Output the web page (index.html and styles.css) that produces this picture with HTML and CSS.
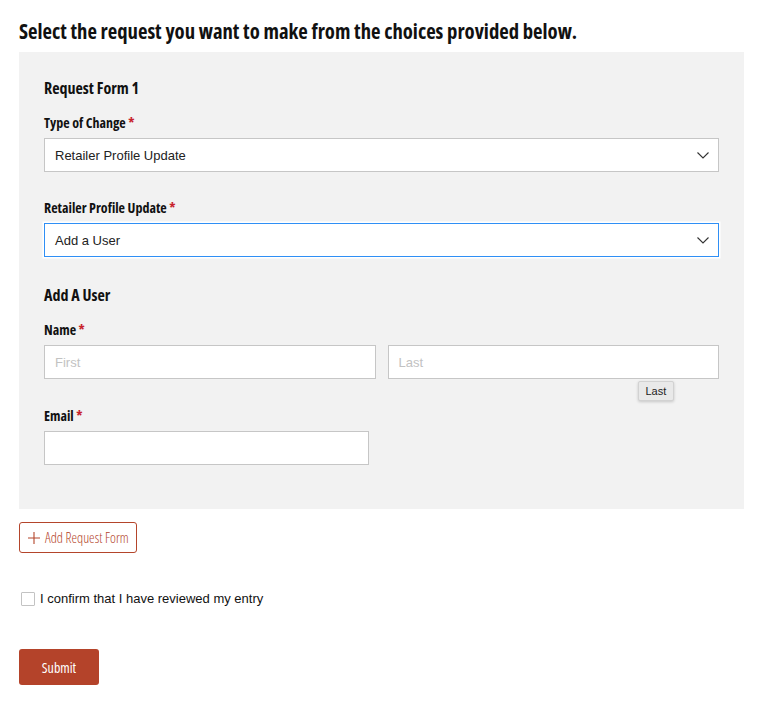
FILE: index.html
```html
<!DOCTYPE html>
<html lang="en">
<head>
<meta charset="utf-8">
<title>Request Form</title>
<link rel="stylesheet" href="styles.css">
</head>
<body>
<div class="page">
  <h1 class="title">Select the request you want to make from the choices provided below.</h1>
  <section class="panel">
    <h2 class="section-title">Request Form 1</h2>
    <div class="field">
      <label class="label">Type of Change <span class="req">*</span></label>
      <div class="select">
        <span class="select-text">Retailer Profile Update</span>
        <svg class="chev" width="12" height="7" viewBox="0 0 12 7"><path d="M0.5 0.5 L6 6 L11.5 0.5" fill="none" stroke="#333" stroke-width="1.1"/></svg>
      </div>
    </div>
    <div class="field">
      <label class="label">Retailer Profile Update <span class="req">*</span></label>
      <div class="select focused">
        <span class="select-text">Add a User</span>
        <svg class="chev" width="12" height="7" viewBox="0 0 12 7"><path d="M0.5 0.5 L6 6 L11.5 0.5" fill="none" stroke="#333" stroke-width="1.1"/></svg>
      </div>
    </div>
    <h2 class="section-title sub">Add A User</h2>
    <div class="field tight">
      <label class="label">Name <span class="req">*</span></label>
      <div class="name-row">
        <div class="input"><span class="placeholder">First</span></div>
        <div class="input has-tip"><span class="placeholder">Last</span><div class="tooltip">Last</div></div>
      </div>
    </div>
    <div class="field email-field">
      <label class="label">Email <span class="req">*</span></label>
      <div class="input email"></div>
    </div>
  </section>
  <button class="add-btn" type="button">
    <svg width="12" height="12" viewBox="0 0 12 12"><path d="M6 0 V12 M0 6 H12" stroke="#b4452b" stroke-width="1.1" fill="none"/></svg>
    <span>Add Request Form</span>
  </button>
  <label class="confirm"><span class="box"></span><span>I confirm that I have reviewed my entry</span></label>
  <button class="submit" type="button">Submit</button>
</div>
</body>
</html>
```
FILE: styles.css
```css
* { box-sizing: border-box; }
html, body { margin: 0; padding: 0; background: #fff; }
body { font-family: "Open Sans", "DejaVu Sans Condensed", sans-serif; color: #111; }
.page { width: 725px; margin-left: 19px; display: flex; flex-direction: column; align-items: flex-start; }
.title { font-size: 20.7px; line-height: 28px; font-weight: 700; font-stretch: 75%; margin: 17px 0 7px; letter-spacing: 0; color: #111; white-space: nowrap; }
.panel { width: 725px; background: #f2f2f2; padding: 25px 25px 44px; display: flex; flex-direction: column; }
.section-title { font-size: 16px; line-height: 22px; font-weight: 700; font-stretch: 75%; margin: 0; color: #111; }
.section-title.sub { margin-top: 27px; }
.field { margin-top: 14px; display: flex; flex-direction: column; }
.field + .field { margin-top: 26px; }
.field.tight { margin-top: 14px; }
.field.email-field { margin-top: 27px; }
.label { font-size: 14px; line-height: 20px; font-weight: 700; font-stretch: 75%; margin-bottom: 5px; color: #111; }
.req { color: #c8232c; }
.select { height: 34px; background: #fff; border: 1px solid #c6c6c6; display: flex; align-items: center; justify-content: space-between; padding: 0 9px 0 10px; font-family: "Liberation Sans", Arial, sans-serif; font-size: 13px; color: #222; }
.select.focused { border-color: #2f8ff5; box-shadow: 0 0 0 1.5px #fff; }
.chev { display: block; }
.name-row { display: grid; grid-template-columns: 1fr 1fr; gap: 12px; }
.input { position: relative; height: 34px; background: #fff; border: 1px solid #c6c6c6; display: flex; align-items: center; padding: 0 10px; font-family: "Liberation Sans", Arial, sans-serif; font-size: 13px; }
.placeholder { color: #c2c2c2; }
.input.email { width: 325px; }
.tooltip { position: absolute; top: 35px; left: 249px; height: 20px; padding: 0 7px; background: #e9e9e9; border: 1px solid #d2d2d2; border-radius: 2px; box-shadow: 0 1px 3px rgba(0,0,0,0.18); font-family: "Liberation Sans", Arial, sans-serif; font-size: 11px; line-height: 18px; color: #222; }
.add-btn { margin-top: 13px; height: 31px; display: flex; align-items: center; gap: 5px; padding: 0 7px 0 8px; background: #fff; border: 1px solid #b4452b; border-radius: 3px; color: #b4452b; font-family: "Open Sans", "DejaVu Sans Condensed", sans-serif; font-stretch: 75%; font-weight: 300; font-size: 14px; white-space: nowrap; cursor: pointer; }
.add-btn svg { display: block; flex: none; }
.confirm { margin-top: 38px; margin-left: 2px; display: flex; align-items: center; gap: 5px; font-family: "Liberation Sans", Arial, sans-serif; font-size: 13px; color: #111; }
.box { width: 14px; height: 14px; border: 1px solid #c3c3c3; background: #fff; border-radius: 1px; }
.submit { margin-top: 43px; width: 80px; height: 36px; background: #b4432a; border: none; border-radius: 3px; color: #fff; font-family: "Open Sans", "DejaVu Sans Condensed", sans-serif; font-stretch: 75%; font-size: 14px; cursor: pointer; }
```
